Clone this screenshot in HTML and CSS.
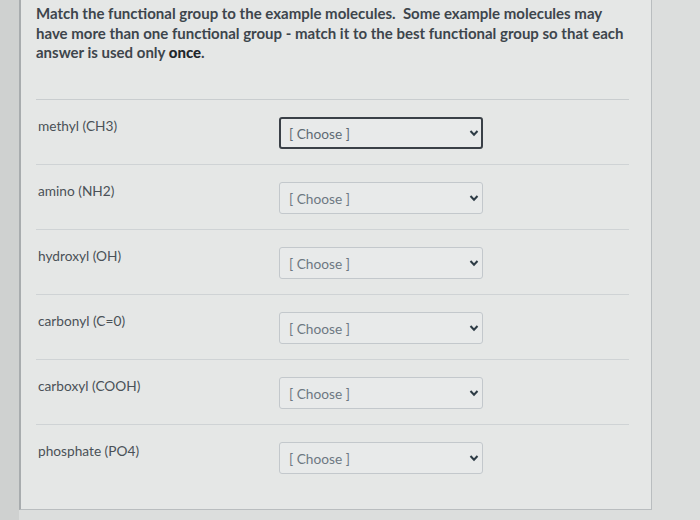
FILE: index.html
```html
<!DOCTYPE html>
<html>
<head>
<meta charset="utf-8">
<link rel="stylesheet" href="styles.css">
</head>
<body>
<div class="page">
  <div class="card">
    <div class="question">
      Match the functional group to the example molecules.&nbsp; Some example molecules may have more than one functional group - match it to the best functional group so that each answer is used only <strong>once</strong>.
    </div>
    <div class="rows">
      <div class="row">
        <div class="label">methyl (CH3)</div>
        <div class="sel focus"><select><option>[ Choose ]</option></select><svg class="chev" width="10" height="8" viewBox="0 0 10 8"><path d="M1.5 2 L5 5.8 L8.5 2" fill="none" stroke="#2d3b45" stroke-width="2"/></svg></div>
      </div>
      <div class="row">
        <div class="label">amino (NH2)</div>
        <div class="sel"><select><option>[ Choose ]</option></select><svg class="chev" width="10" height="8" viewBox="0 0 10 8"><path d="M1.5 2 L5 5.8 L8.5 2" fill="none" stroke="#2d3b45" stroke-width="2"/></svg></div>
      </div>
      <div class="row">
        <div class="label">hydroxyl (OH)</div>
        <div class="sel"><select><option>[ Choose ]</option></select><svg class="chev" width="10" height="8" viewBox="0 0 10 8"><path d="M1.5 2 L5 5.8 L8.5 2" fill="none" stroke="#2d3b45" stroke-width="2"/></svg></div>
      </div>
      <div class="row">
        <div class="label">carbonyl (C=0)</div>
        <div class="sel"><select><option>[ Choose ]</option></select><svg class="chev" width="10" height="8" viewBox="0 0 10 8"><path d="M1.5 2 L5 5.8 L8.5 2" fill="none" stroke="#2d3b45" stroke-width="2"/></svg></div>
      </div>
      <div class="row">
        <div class="label">carboxyl (COOH)</div>
        <div class="sel"><select><option>[ Choose ]</option></select><svg class="chev" width="10" height="8" viewBox="0 0 10 8"><path d="M1.5 2 L5 5.8 L8.5 2" fill="none" stroke="#2d3b45" stroke-width="2"/></svg></div>
      </div>
      <div class="row">
        <div class="label">phosphate (PO4)</div>
        <div class="sel"><select><option>[ Choose ]</option></select><svg class="chev" width="10" height="8" viewBox="0 0 10 8"><path d="M1.5 2 L5 5.8 L8.5 2" fill="none" stroke="#2d3b45" stroke-width="2"/></svg></div>
      </div>
    </div>
  </div>
  <div class="below"></div>
</div>
</body>
</html>
```
FILE: styles.css
```css
html, body {
  margin: 0;
  padding: 0;
  background: #d9dbda;
  font-family: Lato, "Liberation Sans", sans-serif;
}
.page {
  width: 700px;
  height: 520px;
  overflow: hidden;
  background: linear-gradient(to right, #cfd1d0 0, #cfd1d0 19px, #dcdedd 19px);
}
.card {
  margin-left: 19px;
  width: 633px;
  height: 510px;
  box-sizing: border-box;
  background: #e5e7e6;
  border-left: 2px solid #a8acae;
  border-right: 1px solid #b9bdbf;
  border-bottom: 1px solid #b9bdbf;
  padding: 4px 22px 0 15px;
}
.question {
  font-size: 15px;
  line-height: 19.5px;
  font-weight: 700;
  color: #3d454c;
  height: 95px;
}
.question strong {
  color: #1f262b;
}
.rows {
  border-top: 1px solid #c9cdcf;
}
.row {
  display: flex;
  align-items: flex-start;
  height: 65px;
  box-sizing: border-box;
  padding-top: 17px;
  border-bottom: 1px solid #cfd3d5;
}
.row:last-child {
  border-bottom: none;
}
.label {
  width: 241px;
  padding-left: 2px;
  font-size: 13.7px;
  color: #4a5157;
}
.sel {
  position: relative;
  width: 204px;
  height: 32px;
}
.sel select {
  appearance: none;
  -webkit-appearance: none;
  width: 100%;
  height: 100%;
  box-sizing: border-box;
  border: 1px solid #c3c8cc;
  border-radius: 3px;
  background: #e8eaea;
  font-family: Lato, "Liberation Sans", sans-serif;
  font-size: 13.7px;
  color: #6d7882;
  padding: 0 0 0 9px;
  outline: none;
}
.sel.focus select {
  border: 2px solid #3a4047;
  padding-left: 8px;
  color: #5e6a74;
}
.chev {
  position: absolute;
  right: 4px;
  top: 12px;
}
.below {
  height: 10px;
}
```
